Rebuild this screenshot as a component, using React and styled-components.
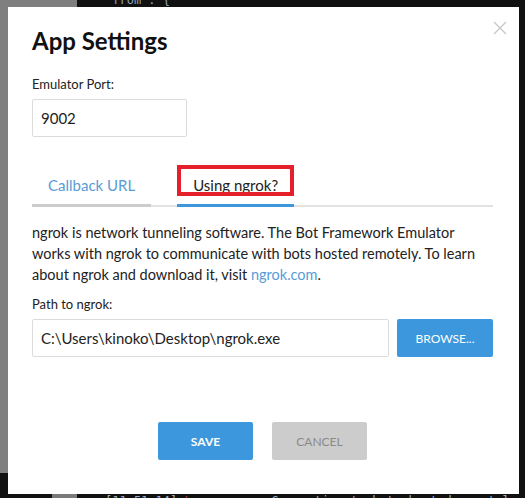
import React from 'react';
import styled, { createGlobalStyle } from 'styled-components';

const GlobalStyle = createGlobalStyle`
  html, body {
    margin: 0;
    padding: 0;
    background: #111111;
    overflow: hidden;
  }
  * {
    box-sizing: border-box;
  }
`;

const Screen = styled.div`
  position: relative;
  width: 525px;
  height: 498px;
  overflow: hidden;
  display: flex;
  background: #111111;
  font-family: Lato, "Open Sans", sans-serif;
`;

const Sidebar = styled.div`
  width: 77px;
  display: flex;
  flex-direction: column;
`;

const SidebarPanel = styled.div`
  flex: 1;
  background: #7f7f7f;
`;

const SidebarFoot = styled.div`
  height: 25px;
  display: flex;
  background: #111111;

  &::after {
    content: '';
    margin-left: 52px;
    margin-top: 21px;
    flex: 1;
    background: #7a7a7a;
  }
`;

const Editor = styled.div`
  flex: 1;
  display: flex;
  flex-direction: column;
  justify-content: space-between;
  padding: 0 0 0 28px;
  font-family: "DejaVu Sans Mono", monospace;
  font-size: 12px;
  line-height: 14px;
  color: #8fa7bd;
`;

const CodeLine = styled.div`
  white-space: pre;
  margin-top: -7px;
`;

const LogLine = styled.div`
  white-space: pre;
  margin-bottom: -10px;
  color: #9ab0c8;
`;

const LogTag = styled.span`
  color: #b03a3a;
`;

const Overlay = styled.div`
  position: absolute;
  inset: 0;
  display: flex;
  padding: 7px 6px 4px 8px;
`;

const Dialog = styled.div`
  flex: 1;
  background: #ffffff;
  display: flex;
  flex-direction: column;
  padding: 0 26px 34px 24px;
  color: #222222;
`;

const Header = styled.div`
  display: flex;
  justify-content: space-between;
  align-items: flex-start;
  padding-top: 18px;
`;

const Title = styled.h1`
  margin: 0;
  font-size: 24px;
  line-height: 32px;
  font-weight: 700;
  color: #111111;
`;

const CloseButton = styled.button`
  border: 0;
  background: none;
  padding: 0;
  margin: -4px -14px 0 0;
  width: 14px;
  height: 14px;
  display: flex;
  cursor: pointer;
`;

const Label = styled.div`
  font-size: 13px;
  line-height: 18px;
  color: #222222;
  margin-top: ${p => p.$gap || 0}px;
`;

const TextField = styled.input`
  height: 38px;
  width: ${p => (p.$wide ? 'auto' : '155px')};
  flex: ${p => (p.$wide ? 1 : 'none')};
  min-width: 0;
  border: 1px solid #dcdcdc;
  border-radius: 2px;
  padding: 0 8px;
  font-family: inherit;
  font-size: 15px;
  color: #222222;
  outline: none;
`;

const PortField = styled(TextField)`
  margin-top: 6px;
`;

const TabBar = styled.div`
  display: flex;
  gap: 26px;
  margin-top: 28px;
  border-bottom: 2px solid #e2e2e2;
  height: 42px;
`;

const Tab = styled.div`
  position: relative;
  display: flex;
  align-items: center;
  padding: 0 16px;
  margin-bottom: -2px;
  font-size: 15px;
  color: ${p => (p.$active ? '#222222' : '#5a9bd6')};
  border-bottom: 3px solid ${p => (p.$active ? '#3c97dc' : '#cccccc')};
`;

const Highlight = styled.span`
  position: absolute;
  left: 0;
  right: 0;
  top: 0;
  height: 31px;
  border: 4px solid #e5202b;
`;

const Description = styled.p`
  margin: 15px 0 0;
  font-size: 14.5px;
  line-height: 21px;
  color: #222222;
`;

const Link = styled.a`
  color: #5a9bd6;
  text-decoration: none;
`;

const PathRow = styled.div`
  display: flex;
  gap: 8px;
  margin-top: 6px;
`;

const Button = styled.button`
  height: 38px;
  width: ${p => p.$width || 95}px;
  border: 0;
  border-radius: 2px;
  font-family: inherit;
  font-size: 12px;
  font-weight: ${p => (p.$bold ? 700 : 400)};
  background: ${p => (p.$muted ? '#cccccc' : '#3c97dc')};
  color: ${p => (p.$muted ? '#8a8a8a' : '#ffffff')};
  cursor: pointer;
`;

const Footer = styled.div`
  margin-top: auto;
  display: flex;
  justify-content: center;
  gap: 19px;
`;

function CloseIcon() {
  return (
    <svg width="14" height="14" viewBox="0 0 14 14">
      <path d="M1 1L13 13M13 1L1 13" stroke="#c8c8c8" strokeWidth="1.4" fill="none" />
    </svg>
  );
}

export default function App() {
  return (
    <>
      <GlobalStyle />
      <Screen>
        <Sidebar>
          <SidebarPanel />
          <SidebarFoot />
        </Sidebar>
        <Editor>
          <CodeLine>{'"from": {'}</CodeLine>
          <LogLine>
            {'[11:51:14] '}
            <LogTag>Learn more.</LogTag>
            {' Connecting to bots hosted remotely'}
          </LogLine>
        </Editor>

        <Overlay>
          <Dialog>
            <Header>
              <Title>App Settings</Title>
              <CloseButton aria-label="Close">
                <CloseIcon />
              </CloseButton>
            </Header>

            <Label $gap={18}>Emulator Port:</Label>
            <PortField defaultValue="9002" />

            <TabBar>
              <Tab>Callback URL</Tab>
              <Tab $active>
                Using ngrok?
                <Highlight />
              </Tab>
            </TabBar>

            <Description>
              ngrok is network tunneling software. The Bot Framework Emulator works with ngrok to
              communicate with bots hosted remotely. To learn about ngrok and download it, visit{' '}
              <Link href="#">ngrok.com</Link>.
            </Description>

            <Label $gap={10}>Path to ngrok:</Label>
            <PathRow>
              <TextField $wide defaultValue="C:\Users\kinoko\Desktop\ngrok.exe" />
              <Button $width={96}>BROWSE...</Button>
            </PathRow>

            <Footer>
              <Button $bold>SAVE</Button>
              <Button $muted>CANCEL</Button>
            </Footer>
          </Dialog>
        </Overlay>
      </Screen>
    </>
  );
}
